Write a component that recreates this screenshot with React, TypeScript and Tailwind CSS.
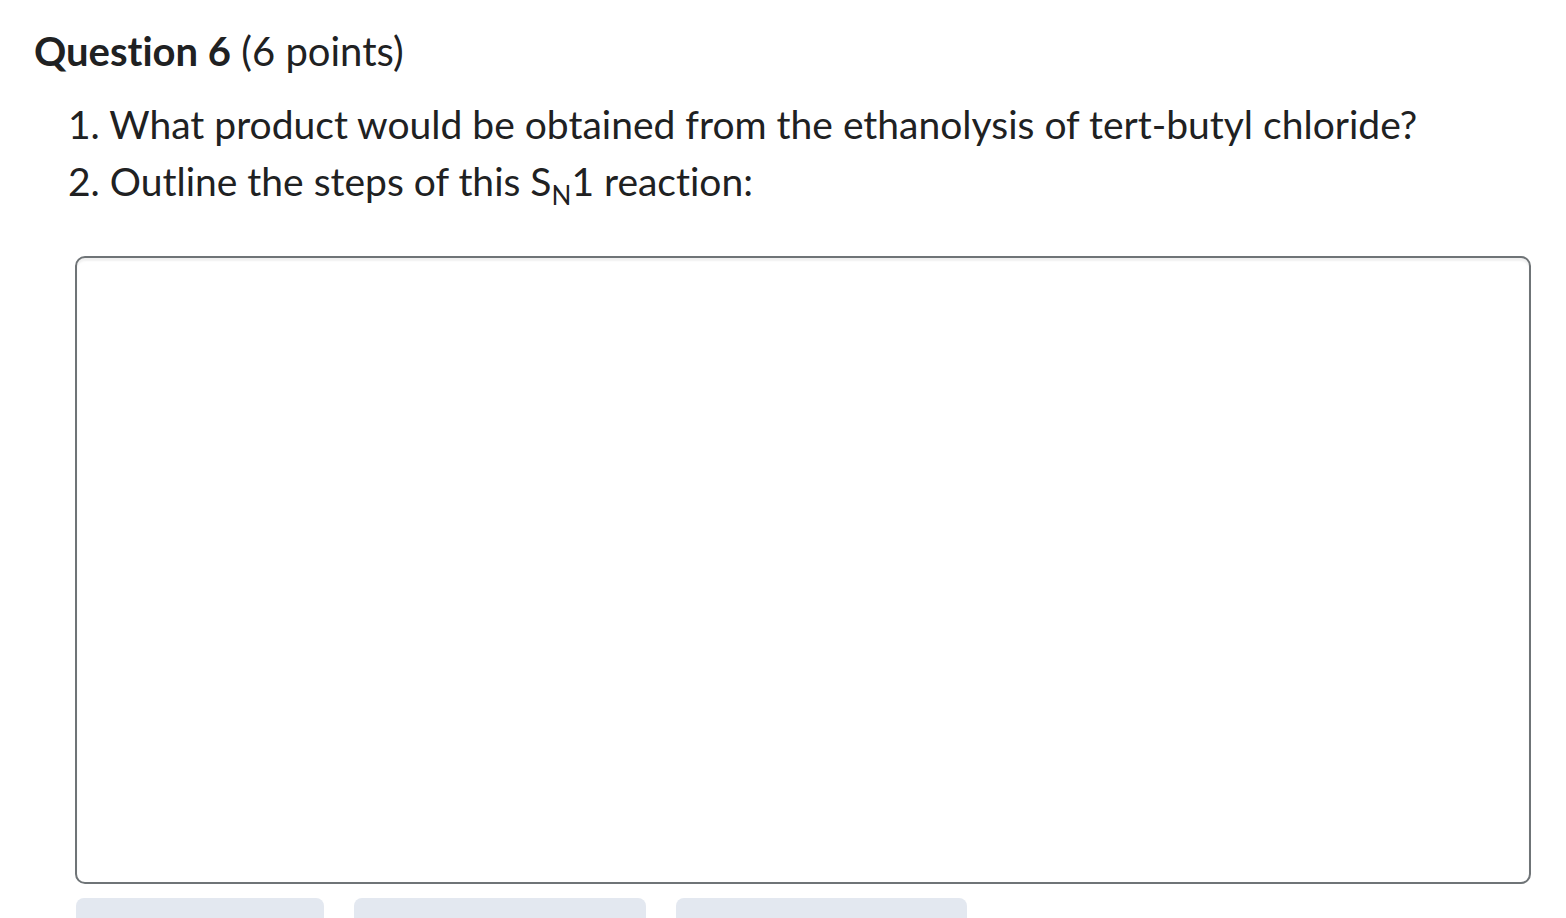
export default function App() {
  return (
    <div className="min-h-screen bg-white text-[#202122] [font-variant-ligatures:none]" style={{ fontFamily: 'Lato, "Noto Sans", sans-serif' }}>
      <div className="pl-[34px] pr-[35px] pt-[24px]">
        <h2 className="text-[40px] leading-[54px]">
          <span className="font-bold">Question 6</span> (6 points)
        </h2>
        <ol className="mt-[18px] pl-[34px] text-[39px] leading-[57px]">
          <li>1. What product would be obtained from the ethanolysis of tert-butyl chloride?</li>
          <li>
            2. Outline the steps of this S<span className="align-[-9px] text-[26px] leading-none">N</span>1 reaction:
          </li>
        </ol>
        <div className="ml-[41px] mt-[46px] h-[628px] rounded-[10px] border-2 border-[#6f7477] bg-white shadow-[inset_0_3px_2px_rgba(0,0,0,0.06)]" />
        <div className="ml-[42px] mt-[14px] flex gap-[30px]">
          <div className="h-[30px] w-[248px] rounded-t-[8px] bg-[#e3e8f0]" />
          <div className="h-[30px] w-[292px] rounded-t-[8px] bg-[#e3e8f0]" />
          <div className="h-[30px] w-[291px] rounded-t-[8px] bg-[#e3e8f0]" />
        </div>
      </div>
    </div>
  );
}
